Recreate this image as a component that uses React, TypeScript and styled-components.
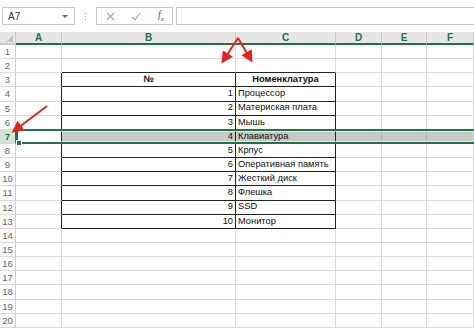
import React from 'react'
import styled, { createGlobalStyle } from 'styled-components'

const GREEN = '#217346'
const GRID = '#dadada'
const COLS = '16px 46px 174px 100px 46px 45px 1fr'

const GlobalStyle = createGlobalStyle`
  html, body { margin: 0; padding: 0; background: #fff; overflow: hidden; }
  body { font-family: "Liberation Sans", Arial, sans-serif; }
`

const columns = ['A', 'B', 'C', 'D', 'E', 'F']
const items = [
  'Процессор',
  'Материская плата',
  'Мышь',
  'Клавиатура',
  'Крпус',
  'Оперативная память',
  'Жесткий диск',
  'Флешка',
  'SSD',
  'Монитор',
]
const rowCount = 20
const selectedRow = 7
const tableTop = 3
const tableBottom = 13

const SheetRow = ({ r }: { r: number }) => {
  const inTable = r >= tableTop && r <= tableBottom
  const isSel = r === selectedRow
  return (
    <Row>
      <RowHead $active={isSel}>{r}</RowHead>
      {columns.map((c, i) => {
        const tableCol = c === 'B' || c === 'C'
        const edgeRight = inTable && (tableCol || c === 'A')
        const edgeBottom = tableCol && (inTable || r === tableTop - 1)
        let text: React.ReactNode = null
        let align: 'left' | 'right' | 'center' = 'left'
        let bold = false
        if (r === tableTop && c === 'B') { text = '№'; align = 'center'; bold = true }
        if (r === tableTop && c === 'C') { text = 'Номенклатура'; align = 'center'; bold = true }
        if (r > tableTop && inTable) {
          const n = r - tableTop
          if (c === 'B') { text = n; align = 'right' }
          if (c === 'C') text = items[n - 1]
        }
        return (
          <Cell
            key={c}
            $edgeR={edgeRight}
            $edgeB={edgeBottom}
            $align={align}
            $bold={bold}
            $shade={isSel && i > 0}
          >
            {text}
          </Cell>
        )
      })}
      {isSel && (
        <Selection>
          <Handle />
        </Selection>
      )}
    </Row>
  )
}

const App = () => {
  const rows = Array.from({ length: rowCount }, (_, i) => i + 1)
  return (
    <Page>
      <GlobalStyle />
      <FormulaBar>
        <NameBox>
          <span>A7</span>
          <Caret />
        </NameBox>
        <Dots>
          <i />
          <i />
          <i />
        </Dots>
        <ButtonsBox>
          <IconBtn>
            <svg width="9" height="9" viewBox="0 0 9 9">
              <path d="M1 1 L8 8 M8 1 L1 8" stroke="#a6a6a6" strokeWidth="1.1" />
            </svg>
          </IconBtn>
          <IconBtn>
            <svg width="10" height="9" viewBox="0 0 10 9">
              <path d="M1 5 L4 8 L9 1" stroke="#a6a6a6" strokeWidth="1.1" fill="none" />
            </svg>
          </IconBtn>
          <Fx>
            f<sub>x</sub>
          </Fx>
        </ButtonsBox>
        <FormulaInput />
      </FormulaBar>

      <Sheet>
        <HeadRow>
          <Corner>
            <Tri />
          </Corner>
          {columns.map((c) => (
            <ColHead key={c}>{c}</ColHead>
          ))}
        </HeadRow>
        {rows.map((r) => (
          <SheetRow key={r} r={r} />
        ))}
      </Sheet>

      <Arrows width="474" height="329" viewBox="0 0 474 329">
        <defs>
          <marker id="head" markerWidth="6" markerHeight="6" refX="4.5" refY="3" orient="auto" markerUnits="strokeWidth">
            <path d="M0 0 L6 3 L0 6 Z" fill="#e8221b" />
          </marker>
        </defs>
        <path d="M238 38 L223 61" stroke="#e8221b" strokeWidth="2" fill="none" markerEnd="url(#head)" />
        <path d="M238 38 L251 60" stroke="#e8221b" strokeWidth="2" fill="none" markerEnd="url(#head)" />
        <path d="M47 106 L14 131" stroke="#e8221b" strokeWidth="2" fill="none" markerEnd="url(#head)" />
      </Arrows>
    </Page>
  )
}

export default App

const Page = styled.div`
  position: relative;
  width: 474px;
  height: 329px;
  overflow: hidden;
  background: #fff;
`

const FormulaBar = styled.div`
  display: flex;
  align-items: stretch;
  height: 18px;
  padding: 7px 0 7px 2px;
`

const NameBox = styled.div`
  width: 73px;
  box-sizing: border-box;
  border: 1px solid #c9c9c9;
  display: flex;
  align-items: center;
  justify-content: space-between;
  padding: 0 6px 0 5px;
  font-size: 10px;
  color: #333;
`

const Caret = styled.div`
  width: 0;
  height: 0;
  border-left: 3px solid transparent;
  border-right: 3px solid transparent;
  border-top: 3px solid #666;
`

const Dots = styled.div`
  width: 21px;
  display: flex;
  flex-direction: column;
  align-items: center;
  justify-content: center;
  gap: 2px;
  i {
    width: 1px;
    height: 1px;
    background: #aaa;
  }
`

const ButtonsBox = styled.div`
  width: 77px;
  box-sizing: border-box;
  border: 1px solid #c9c9c9;
  display: flex;
  align-items: center;
  padding-left: 9px;
  gap: 16px;
`

const IconBtn = styled.div`
  display: flex;
  align-items: center;
`

const Fx = styled.div`
  font-family: "Liberation Serif", serif;
  font-style: italic;
  font-size: 10px;
  color: #555;
  margin-left: 1px;
  sub {
    font-size: 7px;
  }
`

const FormulaInput = styled.div`
  flex: 1;
  margin-left: 3px;
  border: 1px solid #c9c9c9;
  border-right: none;
`

const Sheet = styled.div`
  display: flex;
  flex-direction: column;
`

const Row = styled.div`
  position: relative;
  display: grid;
  grid-template-columns: ${COLS};
  height: 14.15px;
`

const HeadRow = styled.div`
  display: grid;
  grid-template-columns: ${COLS};
  height: 13px;
`

const Corner = styled.div`
  position: relative;
  background: #e6e6e6;
  border-right: 1px solid #c8c8c8;
  border-bottom: 2px solid #c8c8c8;
  box-sizing: border-box;
`

const Tri = styled.div`
  position: absolute;
  right: 2px;
  bottom: 1px;
  width: 0;
  height: 0;
  border-left: 7px solid transparent;
  border-bottom: 7px solid #c3c3c3;
`

const ColHead = styled.div`
  background: #e6e6e6;
  border-right: 1px solid #c8c8c8;
  border-bottom: 2px solid ${GREEN};
  box-sizing: border-box;
  color: ${GREEN};
  font-size: 10px;
  font-weight: bold;
  display: flex;
  align-items: center;
  justify-content: center;
`

const RowHead = styled.div<{ $active?: boolean }>`
  background: ${(p) => (p.$active ? '#d3e3d9' : '#fff')};
  border-right: 1px solid ${(p) => (p.$active ? GREEN : '#cfcfcf')};
  border-bottom: 1px solid ${GRID};
  box-sizing: border-box;
  color: ${(p) => (p.$active ? GREEN : '#666')};
  font-weight: ${(p) => (p.$active ? 'bold' : 'normal')};
  font-size: 9.5px;
  display: flex;
  align-items: center;
  justify-content: center;
`

const Cell = styled.div<{
  $edgeR?: boolean
  $edgeB?: boolean
  $align: 'left' | 'right' | 'center'
  $bold?: boolean
  $shade?: boolean
}>`
  box-sizing: border-box;
  border-right: 1px solid ${(p) => (p.$edgeR ? '#222' : p.$shade ? '#b3b3b3' : GRID)};
  border-bottom: 1px solid ${(p) => (p.$edgeB ? '#222' : GRID)};
  background: ${(p) => (p.$shade ? '#c8c8c8' : '#fff')};
  font-size: 9.3px;
  font-weight: ${(p) => (p.$bold ? 'bold' : 'normal')};
  color: #111;
  display: flex;
  align-items: center;
  justify-content: ${(p) =>
    p.$align === 'right' ? 'flex-end' : p.$align === 'center' ? 'center' : 'flex-start'};
  padding: 0 2px;
  white-space: nowrap;
  overflow: hidden;
  line-height: 1;
`

const Selection = styled.div`
  position: absolute;
  left: 16px;
  right: 0;
  top: -1px;
  bottom: 0;
  border: 2px solid ${GREEN};
  border-right: none;
  box-shadow: inset 0 0 0 1px rgba(255, 255, 255, 0.55);
  pointer-events: none;
  z-index: 2;
`

const Handle = styled.div`
  position: absolute;
  left: -2px;
  bottom: -4px;
  width: 4px;
  height: 4px;
  background: ${GREEN};
  border: 1px solid #fff;
`

const Arrows = styled.svg`
  position: absolute;
  left: 0;
  top: 0;
  pointer-events: none;
  z-index: 5;
`
